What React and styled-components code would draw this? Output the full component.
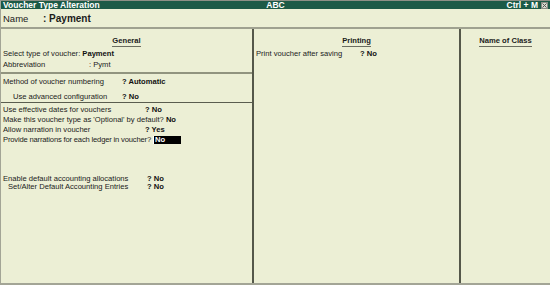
import React from "react";
import styled, { createGlobalStyle } from "styled-components";

const Global = createGlobalStyle`
  html, body { margin: 0; padding: 0; background: #ecefd5; }
  body { font-family: "Liberation Sans", Arial, sans-serif; color: #1b1b1b; }
  *, *::before, *::after { box-sizing: border-box; }
`;

const Window = styled.div`
  width: 550px;
  height: 285px;
  background: #ecefd5;
  border-left: 1px solid #a3a596;
  border-bottom: 2px solid #a3a596;
  border-top: 1px solid #8d8f86;
  display: flex;
  flex-direction: column;
  overflow: hidden;
`;

const TitleBar = styled.div`
  height: 8px;
  flex: none;
  background: #1c5a47;
  color: #ffffff;
  font-weight: bold;
  font-size: 8.5px;
  line-height: 8px;
  display: grid;
  grid-template-columns: 1fr auto 1fr;
  align-items: center;
  padding: 0 2px 0 2px;
`;

const TitleRight = styled.div`
  justify-self: end;
  display: flex;
  align-items: center;
  gap: 3px;
`;

const CloseBox = styled.span`
  width: 7px;
  height: 7px;
  background: #d8dbd0;
  border: 1px solid #8a8c85;
  display: inline-flex;
`;

const NameBar = styled.div`
  height: 20px;
  flex: none;
  border-bottom: 2px solid #9fa190;
  display: flex;
  align-items: center;
  padding-left: 2px;
  font-size: 9.5px;
`;

const NameLabel = styled.span`
  width: 40px;
`;

const NameValue = styled.span`
  font-weight: bold;
  font-size: 10px;
`;

const Panels = styled.div`
  flex: 1;
  display: flex;
`;

const Panel = styled.div`
  width: ${(p) => p.$w};
  flex: ${(p) => (p.$w ? "none" : "1")};
  border-right: ${(p) => (p.$last ? "none" : "2px solid #55584a")};
  display: flex;
  flex-direction: column;
  font-size: 7.6px;
`;

const Header = styled.div`
  height: 19px;
  display: flex;
  justify-content: center;
  align-items: flex-end;
  padding-bottom: 1px;
`;

const HeaderText = styled.span`
  font-weight: bold;
  line-height: 8px;
  padding-bottom: 1px;
  border-bottom: 1px solid #6b6d60;
`;

const Section = styled.div`
  padding: ${(p) => p.$pad || "0"};
  border-bottom: ${(p) => p.$border || "none"};
  display: flex;
  flex-direction: column;
`;

const Row = styled.div`
  height: ${(p) => p.$h || 10}px;
  line-height: ${(p) => p.$lh || p.$h || 10}px;
  padding-left: ${(p) => p.$indent || 2}px;
  padding-top: ${(p) => p.$top || 0}px;
  display: flex;
  white-space: nowrap;
`;

const Label = styled.span`
  width: ${(p) => (p.$w ? `${p.$w}px` : "auto")};
  margin-right: ${(p) => (p.$w ? 0 : 2)}px;
  letter-spacing: ${(p) => (p.$tight ? "-0.17px" : "normal")};
  flex: none;
`;

const Value = styled.span`
  font-weight: bold;
  color: #111;
`;

const Plain = styled.span``;

const Cursor = styled.span`
  display: inline-block;
  width: 28px;
  height: 8px;
  margin-top: 1px;
  background: #000;
  color: #fff;
  line-height: 8px;
  font-weight: bold;
  padding-left: 1px;
  border-left: 1px solid #fff;
`;

export default function App() {
  return (
    <>
      <Global />
      <Window>
        <TitleBar>
          <span>Voucher Type Alteration</span>
          <span>ABC</span>
          <TitleRight>
            <span>Ctrl + M</span>
            <CloseBox>
              <svg width="5" height="5" viewBox="0 0 5 5">
                <path d="M0.5 0.5 L4.5 4.5 M4.5 0.5 L0.5 4.5" stroke="#555" strokeWidth="1" />
              </svg>
            </CloseBox>
          </TitleRight>
        </TitleBar>
        <NameBar>
          <NameLabel>Name</NameLabel>
          <NameValue>: Payment</NameValue>
        </NameBar>
        <Panels>
          <Panel $w="253px">
            <Header>
              <HeaderText>General</HeaderText>
            </Header>
            <Section $pad="0 0 1px 0" $border="2px solid #91947f">
              <Row $h={11}>
                <Plain>Select type of voucher:&nbsp;</Plain>
                <Value>Payment</Value>
              </Row>
              <Row $h={12}>
                <Label $w={86}>Abbreviation</Label>
                <Plain>: Pymt</Plain>
              </Row>
            </Section>
            <Section $border="1px solid #5a5d4f" $pad="1px 0 0 0">
              <Row $h={13}>
                <Label $w={119}>Method of voucher numbering</Label>
                <Value>? Automatic</Value>
              </Row>
              <Row $h={14} $lh={10} $top={4} $indent={12}>
                <Label $w={109}>Use advanced configuration</Label>
                <Value>? No</Value>
              </Row>
            </Section>
            <Section $pad="2px 0 0 0">
              <Row>
                <Label $w={142}>Use effective dates for vouchers</Label>
                <Value>? No</Value>
              </Row>
              <Row>
                <Plain>Make this voucher type as 'Optional' by default?&nbsp;</Plain>
                <Value>No</Value>
              </Row>
              <Row>
                <Label $w={142}>Allow narration in voucher</Label>
                <Value>? Yes</Value>
              </Row>
              <Row>
                <Label $tight>Provide narrations for each ledger in voucher?</Label>
                <Cursor>No</Cursor>
              </Row>
              <Row $h={30} />
              <Row $h={8}>
                <Label $w={144}>Enable default accounting allocations</Label>
                <Value>? No</Value>
              </Row>
              <Row $h={8} $indent={7}>
                <Label $w={139}>Set/Alter Default Accounting Entries</Label>
                <Value>? No</Value>
              </Row>
            </Section>
          </Panel>
          <Panel $w="207px">
            <Header>
              <HeaderText>Printing</HeaderText>
            </Header>
            <Section>
              <Row $h={11}>
                <Label $w={104}>Print voucher after saving</Label>
                <Value>? No</Value>
              </Row>
            </Section>
          </Panel>
          <Panel $last>
            <Header>
              <HeaderText>Name of Class</HeaderText>
            </Header>
          </Panel>
        </Panels>
      </Window>
    </>
  );
}
